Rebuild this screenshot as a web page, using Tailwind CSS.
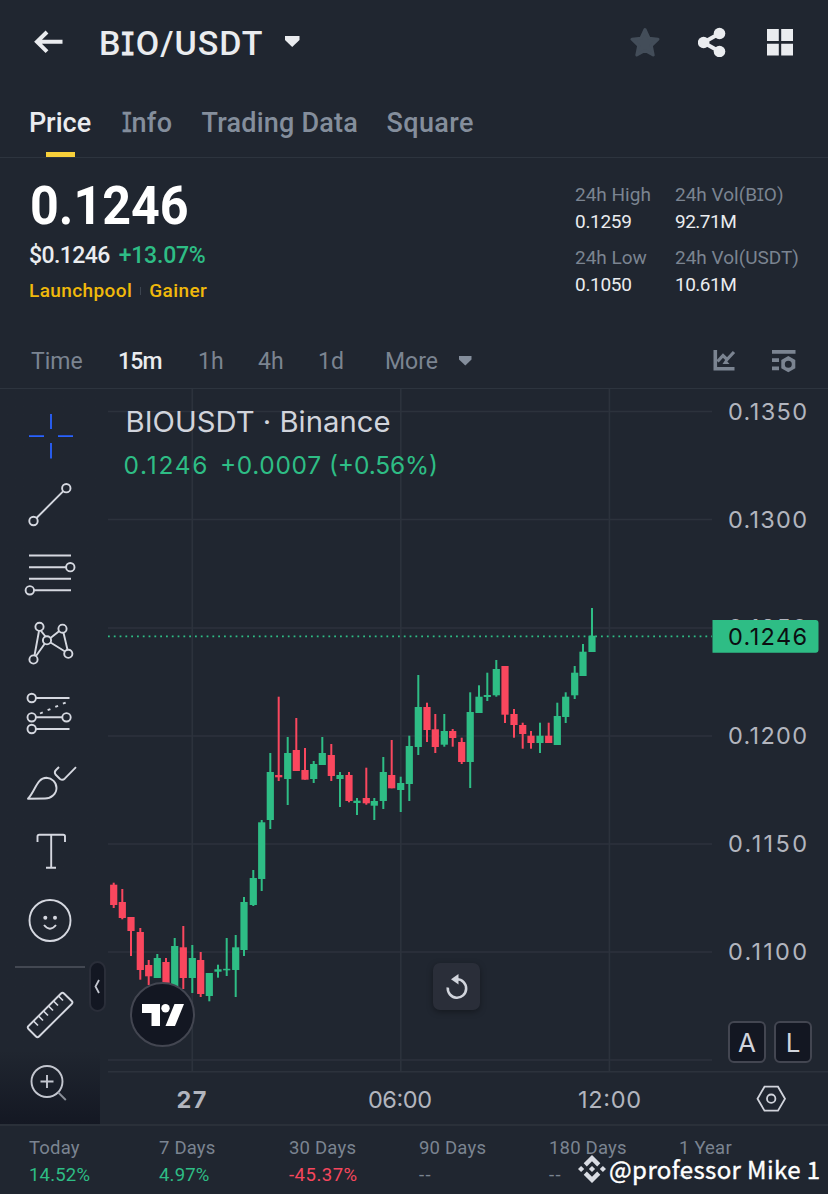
<!DOCTYPE html>
<html lang="en">
<head>
<meta charset="utf-8">
<title>BIO/USDT</title>
<script src="https://cdn.jsdelivr.net/npm/@tailwindcss/browser@4"></script>
</head>
<body class="bg-[#202630]">
<div class="relative flex h-[1194px] w-[828px] flex-col overflow-hidden bg-[#202630] font-['Roboto',sans-serif] whitespace-nowrap text-[#7b8491]">

  <header class="flex h-[86px] items-center pr-[34px] pl-[34px] text-[#eaecef]">
    <svg class="-mt-[2px] h-[24px] w-[29px]" viewBox="34 30 29 24" fill="none" stroke="currentColor" stroke-width="4"><path d="M62.5 41.8H37M47 32L37 41.8L47 51.6"/></svg>
    <h1 class="ml-[36px] text-[34px] leading-[44px] font-medium tracking-[1px]">B<span class="-mx-[3px] inline-block scale-x-80 font-['DejaVu_Sans_Mono'] text-[32px] font-normal [-webkit-text-stroke:1.2px_#eaecef]">I</span>O/USDT</h1>
    <svg class="absolute top-[35px] left-[284px] h-[13px] w-[16px]" viewBox="284 35 16 13" fill="currentColor"><path d="M285 36h14.5v4L292.200 47L285 40z"/></svg>
    <div class="-mt-[2px] ml-auto flex items-center gap-[38px]">
      <svg class="h-[30px] w-[30px]" viewBox="630 27 30 30" fill="#434d59" stroke="#434d59" stroke-width="3" stroke-linejoin="round"><path d="M645 29.500L649 38.200L658 39.200L651.300 45.600L653.200 55L645 50.500L636.800 55L638.700 45.600L632 39.200L641 38.200z"/></svg>
      <svg class="mr-[2px] h-[30px] w-[28px]" viewBox="698 27 28 30" fill="currentColor"><path d="M719.500 33.500L703.500 42.500L719.500 51.500" fill="none" stroke="currentColor" stroke-width="4"/><circle cx="719.500" cy="33.500" r="5.800"/><circle cx="703.600" cy="42.500" r="5.800"/><circle cx="719.500" cy="51.500" r="5.800"/></svg>
      <svg class="h-[28px] w-[28px]" viewBox="766 28 28 28" fill="currentColor"><path d="M767 29h11.800v12H767zM781.200 29H793v12h-11.800zM767 43.800h11.800v11.700H767zM781.200 43.800H793v11.700h-11.800z"/></svg>
    </div>
  </header>

  <nav class="flex h-[72px] gap-[30px] border-b border-[#2d343e] pt-[19px] pl-[29.5px] text-[27px] leading-[37px] font-medium text-[#848e9c]">
    <div class="flex w-[61px] flex-col items-center justify-between text-[#eaecef]"><span>Price</span><i class="h-[5px] w-[29px] bg-[#f8d03a]"></i></div>
    <span class="w-[51px] tracking-[0.3px]"><span class="-mr-[3px] -ml-[2px] inline-block scale-x-75 font-['DejaVu_Sans_Mono'] text-[26px] font-normal [-webkit-text-stroke:0.7px_#848e9c]">I</span>nfo</span>
    <span class="w-[155px] tracking-[0.2px]">Trading Data</span>
    <span class="tracking-[0.4px]">Square</span>
  </nav>

  <section class="flex h-[177px] justify-between pl-[29px]">
    <div class="pt-[21px]">
      <div class="ml-px origin-left scale-x-93 text-[54px] leading-[54px] font-bold text-white">0.1246</div>
      <div class="mt-[10px] flex gap-[9px] text-[23px] leading-[26px] font-medium"><span class="tracking-[-0.6px] text-[#eaecef]">$0.1246</span><span class="tracking-[-0.2px] text-[#2ebd85]">+13.07%</span></div>
      <div class="mt-[10px] flex items-center gap-[8px] text-[19px] leading-[24px] font-medium tracking-[0.4px] text-[#f0b90b]"><span>Launchpool</span><i class="h-[8px] w-px bg-[#3c444f]"></i><span>Gainer</span></div>
    </div>
    <div class="grid h-fit grid-cols-[100px_153px] gap-y-[9px] pt-[23px] text-[19px] leading-[27px]">
      <div class="flex flex-col items-start"><span>24h High</span><span class="tracking-[-0.3px] text-[#eaecef]">0.1259</span></div>
      <div class="flex flex-col items-start"><span>24h Vol(B<span class="-mx-[2px] inline-block scale-x-80 font-['DejaVu_Sans_Mono'] text-[18px]">I</span>O)</span><span class="tracking-[-0.5px] text-[#eaecef]">92.71M</span></div>
      <div class="flex flex-col items-start"><span>24h Low</span><span class="tracking-[-0.3px] text-[#eaecef]">0.1050</span></div>
      <div class="flex flex-col items-start"><span>24h Vol(USDT)</span><span class="tracking-[-0.5px] text-[#eaecef]">10.61M</span></div>
    </div>
  </section>

  <div class="flex h-[54px] items-center border-b border-[#2d343e] pl-[31px] text-[23px] leading-[30px]">
    <span class="w-[87px]">Time</span>
    <span class="w-[80px] font-medium tracking-[-0.8px] text-[#eaecef]">15m</span>
    <span class="w-[60px]">1h</span>
    <span class="w-[60px]">4h</span>
    <span class="w-[67px]">1d</span>
    <span class="w-[73px]">More</span>
    <svg class="-mt-[2px] h-[12px] w-[15px]" viewBox="458 354 15 12" fill="#848e9c"><path d="M459 355h12.500v3.500L465.300 364.500L459 358.500z"/></svg>
    <svg class="-mt-[3px] ml-auto h-[24px] w-[24px]" viewBox="712 348 24 24" fill="none" stroke="#7b8491" stroke-width="3.600"><path d="M715.300 350v18.700H734.500"/><path d="M717.500 361.500L723 355.500L727 359.500L734 352" stroke-width="3.200"/><path d="M725.500 359.500L729.500 364H722.500z" fill="#7b8491" stroke="none"/></svg>
    <svg class="-mt-[1px] mr-[31px] ml-[35px] h-[24px] w-[26px]" viewBox="771 349 26 24" fill="#7b8491"><path d="M772 350h23.500v3.800H772zM772 358.300h7v3.700h-7zM772 366.500h7v3.700h-7z"/><path fill-rule="evenodd" d="M788.300 356l7 4v8.300l-7 4l-7-4V360zM788.300 360.700a3.500 3.500 0 1 0 0 7a3.500 3.500 0 1 0 0-7z"/></svg>
  </div>

  <main class="relative flex h-[735px]">
    <aside class="flex w-[100px] flex-col bg-linear-to-b from-[#202630] from-90% to-[#141823] pt-[12px] text-[#d5d8e0]">
      <svg class="h-[69px] w-[100px]" viewBox="0 401 100 69" fill="none" stroke="#2962ff" stroke-width="1.800"><path d="M51 414v15M51 443v15.500M29 436.200h15M58 436.200h15"/></svg>
      <svg class="h-[69px] w-[100px]" viewBox="0 470 100 69" fill="none" stroke="currentColor" stroke-width="1.900"><circle cx="66.300" cy="488.200" r="4.200"/><circle cx="33.500" cy="521" r="4.200"/><path d="M36.500 518L63.300 491.200"/></svg>
      <svg class="h-[69px] w-[100px]" viewBox="0 539 100 69" fill="none" stroke="currentColor" stroke-width="1.900"><path d="M29 555.500h42M29 567.200h37M29 578.700h42M34 590.300h37"/><circle cx="70.300" cy="567.200" r="4.200"/><circle cx="29.800" cy="590.300" r="4.200"/></svg>
      <svg class="h-[69px] w-[100px]" viewBox="0 608 100 69" fill="none" stroke="currentColor" stroke-width="1.900"><circle cx="39.500" cy="626.800" r="4.100"/><circle cx="62.500" cy="628.700" r="4.100"/><circle cx="47" cy="640.300" r="4.100"/><circle cx="33.500" cy="659.500" r="4.100"/><circle cx="68.300" cy="653.800" r="4.100"/><path d="M39 631L34.500 655.500M40.800 630.700L45.500 636.500M50.500 638L59 631.200M63.500 632.700L67.500 649.700M50.500 642.500L65 651.500M44.700 643.800L36 656"/></svg>
      <svg class="h-[69px] w-[100px]" viewBox="0 677 100 69" fill="none" stroke="currentColor" stroke-width="1.900"><circle cx="31.700" cy="698" r="4.200"/><circle cx="31.700" cy="717.300" r="4.200"/><circle cx="66.500" cy="717.300" r="4.200"/><circle cx="31.700" cy="729" r="4.200"/><path d="M36 698h33.500M36 717.300h26M36 729h33.500"/><path d="M40 713.500L67 702" stroke-dasharray="3 5.300"/></svg>
      <svg class="h-[69px] w-[100px]" viewBox="0 746 100 69" fill="none" stroke="currentColor" stroke-width="1.900" stroke-linejoin="round"><path d="M28 798.700C36 790 36.500 778 46.500 777.800C52 778 56.500 782.500 56.500 788C56.500 794 51 798.500 45 798.500z"/><path d="M59 767L56 770C54.500 771.500 54.500 773 55.500 774.500L60 779C61.500 780 63.500 779.800 64.700 778.700L76 767.200"/></svg>
      <svg class="h-[69px] w-[100px]" viewBox="0 815 100 69" fill="none" stroke="currentColor" stroke-width="1.900"><path d="M37.500 842V836.500Q37.500 834.700 39.300 834.700H63.200Q65 834.700 65 836.500V842M51.200 834.700V867.500M46 867.700h10"/></svg>
      <svg class="h-[69px] w-[100px]" viewBox="0 884 100 69" fill="none" stroke="currentColor" stroke-width="1.900"><circle cx="50" cy="920.500" r="20.500"/><path d="M44 925q6 7.500 12 0"/><g fill="currentColor" stroke="none"><circle cx="45.300" cy="917.700" r="2"/><circle cx="55" cy="917.700" r="2"/></g></svg>
      <i class="mt-[13px] ml-[15px] h-[2px] w-[70px] bg-[#434852]"></i>
      <svg class="h-[76px] w-[100px]" viewBox="0 968 100 76" fill="none" stroke="currentColor" stroke-width="1.900" stroke-linejoin="round"><path d="M61 993.500Q62.500 992 64 993.500L71.700 1001Q73.200 1002.500 71.700 1004L39 1036.500Q37.500 1038 36 1036.500L28.500 1029Q27 1027.500 28.500 1026z"/><path d="M33.500 1021l4.500 4.500M38.500 1016l4.500 4.500M43.500 1011l4.500 4.500M48.500 1006l4.500 4.500M53.500 1001l4.500 4.500M58.500 996l4.500 4.500" stroke-width="1.700"/></svg>
      <svg class="h-[80px] w-[100px]" viewBox="0 1044 100 80" fill="none" stroke="#c3c6cf" stroke-width="1.900"><circle cx="47" cy="1081.500" r="15.500"/><path d="M47 1075v13M40.500 1081.500h13"/><path d="M58.300 1092.500l7.500 7.500" stroke="#8a8f99"/></svg>
    </aside>
    <svg class="h-[735px] w-[728px]" viewBox="100 389 728 735" font-family="Inter, sans-serif">
      <g stroke="#2c323c" stroke-width="1.600">
        <path d="M108 411.500H712M108 519.500H712M108 628H712M108 736H712M108 844H712M108 952H712M108 1060H712"/>
        <path d="M192.300 389V1071M400.800 389V1071M609.400 389V1071M108 1071.700H828"/>
      </g>
      <g id="candles"></g>
      <path d="M108 636.400H712" stroke="#2ebd85" stroke-width="1.800" stroke-dasharray="1.800 4"/>
      <text x="125.500" y="432" font-size="28" fill="#d1d4dc" textLength="265" lengthAdjust="spacingAndGlyphs">BIOUSDT · Binance</text>
      <g fill="#2ebd85" font-size="24.500">
        <text x="123.500" y="474" textLength="84">0.1246</text>
        <text x="220" y="474" textLength="101">+0.0007</text>
        <text x="329" y="474" textLength="109">(+0.56%)</text>
      </g>
      <g fill="#b2b5be" font-size="23.500">
        <text x="728" y="419.500" textLength="79">0.1350</text>
        <text x="728" y="528" textLength="79">0.1300</text>
        <text x="728" y="635.700" textLength="79">0.1250</text>
        <text x="728" y="744" textLength="79">0.1200</text>
        <text x="728" y="852" textLength="79">0.1150</text>
        <text x="728" y="960" textLength="79">0.1100</text>
        <text x="176.500" y="1107.500" textLength="30" font-weight="700">27</text>
        <text x="368" y="1107.500" textLength="64">06:00</text>
        <text x="578" y="1107.500" textLength="63">12:00</text>
      </g>
      <path d="M712.500 620H815.500a3 3 0 0 1 3 3V649.700a3 3 0 0 1-3 3H712.500z" fill="#2ebd85"/>
      <text x="728" y="644.700" font-size="23.500" textLength="79" fill="#0b0e11">0.1246</text>
      <path d="M764.500 1086.700h13.500l7 12l-7 12h-13.500l-7-12z" fill="none" stroke="#d1d4dc" stroke-width="1.800"/>
      <circle cx="771.200" cy="1098.700" r="4.200" fill="none" stroke="#d1d4dc" stroke-width="1.800"/>
    </svg>
    <div class="absolute top-[572px] left-[89px] flex h-[51px] w-[17px] items-center justify-center rounded-full border-2 border-[#2a2e39] bg-[#131722]">
      <svg class="mr-px h-[15px] w-[6px]" viewBox="0 0 6 15" fill="none" stroke="#c3c6cf" stroke-width="1.800"><path d="M5 1L1.500 7.500L5 14"/></svg>
    </div>
    <div class="absolute top-[593px] left-[130px] flex size-[65px] items-center justify-center rounded-full border-2 border-[#434651] bg-[#131722]">
      <svg class="mt-px h-[22px] w-[42px]" viewBox="0 0 42 22" fill="#fff"><path d="M0 0H18V22H9.500V9H0z"/><circle cx="23.500" cy="4.300" r="4.200"/><path d="M32.500 0H42L33 22H23.500z"/></svg>
    </div>
    <div class="absolute top-[574px] left-[433px] flex size-[47px] items-center justify-center rounded-[7px] bg-[#2a2e39] shadow-[0_2px_6px_rgba(0,0,0,0.35)]">
      <svg class="h-[26px] w-[24px]" viewBox="444.500 974 24 26" fill="none" stroke="#d1d4dc" stroke-width="2.600"><path d="M447.300 987.500A9.200 9.200 0 1 0 456.500 979.300"/><path d="M450.500 979.300L458 974V984.500z" fill="#d1d4dc" stroke="none"/></svg>
    </div>
    <div class="absolute top-[632px] left-[728px] flex gap-[8px] font-['Inter',sans-serif] text-[26px] text-[#d1d4dc]">
      <span class="flex h-[42px] w-[38px] items-center justify-center rounded-[6px] border-2 border-[#434651] bg-[#131722] pt-px">A</span>
      <span class="flex h-[42px] w-[38px] items-center justify-center rounded-[6px] border-2 border-[#434651] bg-[#131722] pt-px">L</span>
    </div>
  </main>

  <footer class="relative grid h-[70px] grid-cols-[repeat(6,130px)] border-t-2 border-[#2a3039] pt-[9px] pl-[29px] text-[18.500px] leading-[27px] tracking-[0.2px]">
    <div class="flex flex-col items-start"><span>Today</span><span class="text-[#2ebd85]">14.52%</span></div>
    <div class="flex flex-col items-start"><span>7 Days</span><span class="text-[#2ebd85]">4.97%</span></div>
    <div class="flex flex-col items-start"><span>30 Days</span><span class="tracking-[0.5px] text-[#f6465d]">-45.37%</span></div>
    <div class="flex flex-col items-start"><span>90 Days</span><span class="tracking-[1.5px]">--</span></div>
    <div class="flex flex-col items-start"><span>180 Days</span><span class="tracking-[1.5px]">--</span></div>
    <div class="flex flex-col items-start"><span>1 Year</span><span class="tracking-[1.5px]">--</span></div>
    <div class="absolute top-[27px] left-[578px] flex items-center gap-[3px] text-white">
      <svg class="h-[28px] w-[28px]" viewBox="0 0 28 28" fill="#d9dce3"><path d="M14 0L22.300 8.300L19.200 11.400L14 6.200L8.800 11.400L5.700 8.300zM14 28L5.700 19.700L8.800 16.600L14 21.800L19.200 16.600L22.300 19.700zM3.100 10.900L6.200 14L3.100 17.100L0 14zM24.900 10.900L28 14L24.900 17.100L21.800 14zM14 10.900L17.100 14L14 17.100L10.900 14z"/></svg>
      <span class="font-['Noto_Sans_CJK_SC',sans-serif] text-[24px] leading-[32px] font-normal tracking-[0.4px] [-webkit-text-stroke:0.4px_white]">@professor Mike 1</span>
    </div>
  </footer>
</div>
<script>
  // x centre, wick top, wick bottom, body top, body bottom, rising
  const candles = [
    [113.7,882.7,908,884.7,905,0],[122.3,889,919.3,902,918,0],[131,917,956,917,931,0],[140.3,928,979.7,932,970,0],
    [148.7,960,985,965,976.3,0],[157.3,954,978,958,978,1],[166,958,985,962,985,0],[174.7,938,990,946,988,1],
    [183.3,926,989,947.3,978,0],[192.3,945,993,958,978,1],[200.7,952,997,960,994,0],[209.3,973,1001.3,973,996,1],
    [218,964.7,977.7,969.3,971.7,1],[226.7,938,976,968.8,970.3,1],[235.7,935,997,947.3,970,1],[244,897,956,902,950,1],
    [253.3,870,906,878,905,1],[261.7,820,891,822.3,879,1],[270.3,753,829,772,820,1],[278.7,696.7,781,775,777.3,0],
    [287.7,737,805,753,779,1],[296.3,718,771,750,771,0],[305,748,779.7,770,779.7,0],[313.7,761,783,764,779,1],
    [322.3,737,765,753,765,1],[331.3,744,781,755,776,0],[340,772,807,775,779,1],[349,772,802.3,775,801,0],
    [357,798,815,800.7,803,1],[366.3,767.7,804.7,798,803.3,0],[374.3,798,820,801,805.7,1],[383.3,757,809,772,801,1],
    [391.7,740,788.3,775,788.3,0],[400.7,776.7,812,783,790,1],[409.3,735.7,801,746,784,1],[418.3,675,755,707,747,1],
    [427,702.7,742,707,730,0],[435.3,714,753,729.3,747,0],[444.3,714,746.7,731,744.7,1],[452.7,729,746.7,731,738,0],
    [461.7,737.7,764,742,762,0],[470.2,692.3,788,712,762,1],[479,685.3,713,696.7,713,1],[487.3,672.7,701,695,697,1],
    [496.3,660,696.7,669,695.3,1],[505,666,723,666,714.7,0],[514,709,737.7,714,725,0],[522.7,722.7,748.7,725,734,0],
    [531,731,748.7,735.7,743,0],[540,722.7,753,735.7,743,1],[548.7,722.7,743,735.7,743,0],[557.3,702.7,745,716,745,1],
    [565.7,692.3,723,696.7,717,1],[574.7,666,699,672.7,695.3,1],[583,644,676,651.7,676,1],[592,608,652,635.7,652,1]
  ];
  document.getElementById('candles').innerHTML = candles.map(([x, t, b, o, c, up]) =>
    `<g fill="${up ? '#2ebd85' : '#fa475e'}"><rect x="${x - 1}" y="${t}" width="2" height="${b - t}"/><rect x="${x - 3.6}" y="${o}" width="7.2" height="${c - o}"/></g>`).join('');
</script>
</body>
</html>
